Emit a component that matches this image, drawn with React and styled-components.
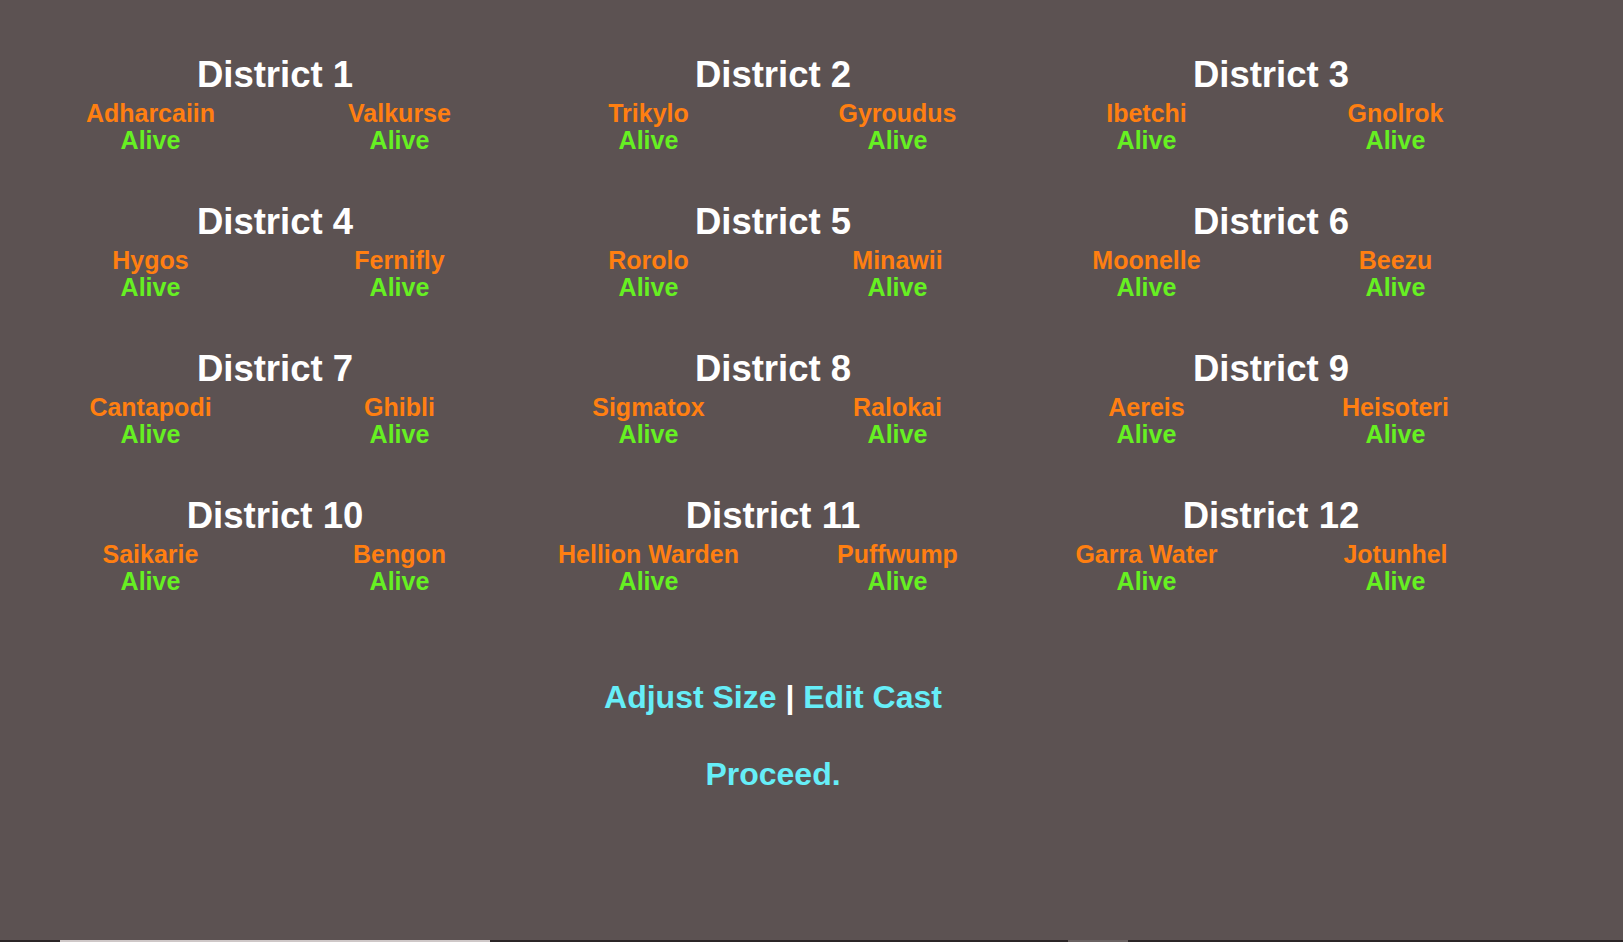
import styled, { createGlobalStyle } from 'styled-components'

const districts = [
  ['Adharcaiin', 'Valkurse'],
  ['Trikylo', 'Gyroudus'],
  ['Ibetchi', 'Gnolrok'],
  ['Hygos', 'Fernifly'],
  ['Rorolo', 'Minawii'],
  ['Moonelle', 'Beezu'],
  ['Cantapodi', 'Ghibli'],
  ['Sigmatox', 'Ralokai'],
  ['Aereis', 'Heisoteri'],
  ['Saikarie', 'Bengon'],
  ['Hellion Warden', 'Puffwump'],
  ['Garra Water', 'Jotunhel'],
]

const GlobalStyle = createGlobalStyle`
  html, body {
    margin: 0;
    padding: 0;
    background: #5c5252;
    font-family: "Liberation Sans", Arial, sans-serif;
  }
`

const Page = styled.div`
  min-height: 942px;
  display: flex;
  flex-direction: column;
`

const Content = styled.div`
  width: 1494px;
  margin-left: 26px;
  padding-top: 54px;
`

const Board = styled.div`
  display: grid;
  grid-template-columns: repeat(3, 498px);
  row-gap: 47px;
`

const District = styled.div`
  display: flex;
  flex-direction: column;
`

const Heading = styled.h2`
  margin: 0 0 5px;
  color: #ffffff;
  font-size: 36.5px;
  line-height: 41px;
  font-weight: bold;
  text-align: center;
`

const Tributes = styled.div`
  display: grid;
  grid-template-columns: 249px 249px;
`

const Tribute = styled.div`
  text-align: center;
  font-size: 25px;
  font-weight: bold;
  line-height: 27px;
`

const Name = styled.div`
  color: #ff7f11;
`

const Status = styled.div`
  color: #66f022;
`

const Links = styled.div`
  margin-top: 84px;
  text-align: center;
  font-size: 32px;
  font-weight: bold;
  line-height: 37px;
  color: #ffffff;
`

const Link = styled.a`
  color: #66eef8;
  text-decoration: none;
  cursor: pointer;
`

const Proceed = styled(Links)`
  margin-top: 40px;
`

const Track = styled.div`
  margin-top: auto;
  height: 2px;
  background: #2b2526;
  display: flex;
`

const Thumb = styled.div`
  width: ${p => p.$w}px;
  margin-left: ${p => p.$at}px;
  background: ${p => p.$c};
`

export default function App() {
  return (
    <Page>
      <GlobalStyle />
      <Content>
        <Board>
          {districts.map((pair, i) => (
            <District key={i}>
              <Heading>District {i + 1}</Heading>
              <Tributes>
                {pair.map(name => (
                  <Tribute key={name}>
                    <Name>{name}</Name>
                    <Status>Alive</Status>
                  </Tribute>
                ))}
              </Tributes>
            </District>
          ))}
        </Board>
        <Links>
          <Link>Adjust Size</Link> | <Link>Edit Cast</Link>
        </Links>
        <Proceed>
          <Link>Proceed.</Link>
        </Proceed>
      </Content>
      <Track>
        <Thumb $at={60} $w={430} $c="#cfc8c8" />
        <Thumb $at={578} $w={60} $c="#6a6262" />
      </Track>
    </Page>
  )
}
